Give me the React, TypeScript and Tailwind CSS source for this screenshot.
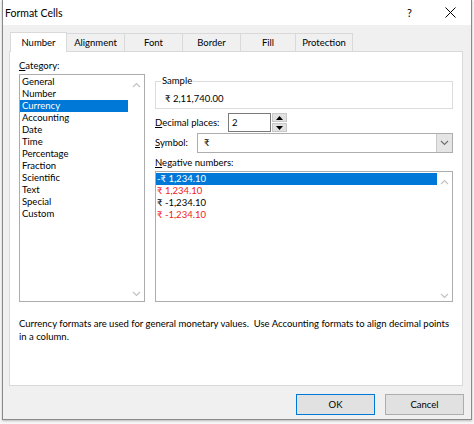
import React from "react";

const font = { fontFamily: 'Lato, "Noto Sans", sans-serif' };

function ChevUp({ className = "" }: { className?: string }) {
  return (
    <svg width="9" height="6" viewBox="0 0 9 6" className={className}>
      <path d="M1 5 L4.5 1.5 L8 5" fill="none" stroke="#c2c2c2" strokeWidth="1.2" />
    </svg>
  );
}
function ChevDown({ className = "", color = "#c2c2c2" }: { className?: string; color?: string }) {
  return (
    <svg width="9" height="6" viewBox="0 0 9 6" className={className}>
      <path d="M1 1 L4.5 4.5 L8 1" fill="none" stroke={color} strokeWidth="1.2" />
    </svg>
  );
}

const categories = [
  "General",
  "Number",
  "Currency",
  "Accounting",
  "Date",
  "Time",
  "Percentage",
  "Fraction",
  "Scientific",
  "Text",
  "Special",
  "Custom",
];

const negatives = [
  { t: "-₹ 1,234.10", red: false },
  { t: "₹ 1,234.10", red: true },
  { t: "₹ -1,234.10", red: false },
  { t: "₹ -1,234.10", red: true },
];

const tabs = ["Number", "Alignment", "Font", "Border", "Fill", "Protection"];
const tabW = [57, 59, 59, 59, 56, 58];

export default function App() {
  return (
    <div className="w-[474px] h-[424px] bg-[#f7f7f7] overflow-hidden text-[9.5px] text-black" style={font}>
      <div className="ml-[2px] w-[470px] h-[420px] border-l border-r border-b border-[#8a8a8a] bg-[#f0f0f0] flex flex-col shadow-[0_1px_2px_rgba(0,0,0,0.25)]">
        {/* title bar */}
        <div className="h-[25px] bg-white flex items-center pl-[2px]">
          <span className="text-[10.5px] leading-[14px]">Format Cells</span>
          <span className="ml-auto mr-[33px] text-[11px] leading-[14px]">?</span>
          <svg width="11" height="11" viewBox="0 0 11 11" className="mr-[15px]">
            <path d="M0.5 0.5 L10.5 10.5 M10.5 0.5 L0.5 10.5" stroke="#000" strokeWidth="1" />
          </svg>
        </div>
        {/* body */}
        <div className="flex-1 pl-[6px] pr-[7px] pt-[6px] flex flex-col">
          {/* tabs */}
          <div className="flex items-end h-[20px] pl-[1px] relative z-10">
            {tabs.map((t, i) =>
              i === 0 ? (
                <div
                  key={t}
                  className="h-[20px] mb-[-1px] bg-white border border-b-0 border-[#d9d9d9] flex items-center justify-center leading-[14px]"
                  style={{ width: tabW[i] }}
                >
                  {t}
                </div>
              ) : (
                <div
                  key={t}
                  className="h-[18px] -ml-px bg-[#f0f0f0] border border-b-0 border-[#d9d9d9] flex items-center justify-center leading-[14px]"
                  style={{ width: tabW[i] }}
                >
                  {t}
                </div>
              )
            )}
          </div>
          {/* panel */}
          <div className="w-[454px] h-[335px] bg-white border border-[#d9d9d9] pl-[9px] pt-[7px] flex flex-col">
            <div className="flex gap-[10px]">
              {/* left column */}
              <div className="flex flex-col w-[126px]">
                <div className="leading-[14px] h-[14px]">
                  <span className="underline">C</span>ategory:
                </div>
                <div className="mt-[1px] h-[228px] border border-[#acacac] relative pt-px">
                  <div className="w-[108px] flex flex-col">
                    {categories.map((c) => (
                      <div
                        key={c}
                        className={
                          "h-[12px] leading-[12px] pl-[2px] whitespace-nowrap " +
                          (c === "Currency" ? "bg-[#0078d7] text-white" : "")
                        }
                      >
                        {c}
                      </div>
                    ))}
                  </div>
                  <ChevUp className="absolute right-[3px] top-[7px]" />
                  <ChevDown className="absolute right-[3px] bottom-[4px]" />
                </div>
              </div>
              {/* right column */}
              <div className="flex flex-col w-[298px] pt-[15px]">
                <fieldset className="border border-[#dcdcdc] px-0 pt-[4px] pb-[2px] m-0">
                  <legend className="ml-[5px] px-[1px] leading-[14px]">Sample</legend>
                  <div className="h-[14px] leading-[14px] pl-[9px]">₹ 2,11,740.00</div>
                </fieldset>
                <div className="mt-[4px] h-[19px] flex items-center">
                  <div className="w-[73px] leading-[14px] whitespace-nowrap">
                    <span className="underline">D</span>ecimal places:
                  </div>
                  <div className="w-[43px] h-[19px] border border-[#7a7a7a] pl-[3px] flex items-center leading-[14px]">
                    2
                  </div>
                  <div className="ml-px w-[15px] h-[19px] flex flex-col gap-px">
                    <div className="h-[9px] bg-[#e1e1e1] border border-[#c8c8c8] flex items-center justify-center">
                      <svg width="7" height="4" viewBox="0 0 7 4">
                        <path d="M0 4 L3.5 0 L7 4 Z" fill="#000" />
                      </svg>
                    </div>
                    <div className="h-[9px] bg-[#e1e1e1] border border-[#c8c8c8] flex items-center justify-center">
                      <svg width="7" height="4" viewBox="0 0 7 4">
                        <path d="M0 0 L3.5 4 L7 0 Z" fill="#000" />
                      </svg>
                    </div>
                  </div>
                </div>
                <div className="mt-[1px] h-[20px] flex items-center">
                  <div className="w-[42px] leading-[14px]">
                    <span className="underline">S</span>ymbol:
                  </div>
                  <div className="w-[256px] h-[20px] border border-[#adadad] flex items-center pl-[6px]">
                    <span className="leading-[14px]">₹</span>
                    <div className="ml-auto w-[16px] h-[18px] bg-[#e5e5e5] border-l border-[#c9c9c9] flex items-center justify-center">
                      <ChevDown color="#707070" />
                    </div>
                  </div>
                </div>
                <div className="mt-[2px] h-[15px] leading-[15px]">
                  <span className="underline">N</span>egative numbers:
                </div>
                <div className="mt-[1px] h-[131px] border border-[#acacac] relative pt-px">
                  <div className="w-[281px] flex flex-col">
                    {negatives.map((n, i) => (
                      <div
                        key={i}
                        className={
                          "h-[12px] leading-[12px] pl-[1px] whitespace-nowrap " +
                          (i === 0 ? "bg-[#0078d7] text-white" : n.red ? "text-[#f01c1c]" : "")
                        }
                      >
                        {n.t}
                      </div>
                    ))}
                  </div>
                  <ChevUp className="absolute right-[3px] top-[7px]" />
                  <ChevDown className="absolute right-[3px] bottom-[2px]" />
                </div>
              </div>
            </div>
            <div className="mt-[15px] leading-[13px] whitespace-nowrap">
              Currency formats are used for general monetary values.&nbsp; Use Accounting formats to align decimal points
              <br />
              in a column.
            </div>
          </div>
          {/* buttons */}
          <div className="mt-[8px] flex justify-end gap-[10px]">
            <div className="w-[79px] h-[21px] bg-[#e1e1e1] border border-[#0078d7] flex items-center justify-center leading-[14px]">
              OK
            </div>
            <div className="w-[79px] h-[21px] bg-[#e1e1e1] border border-[#adadad] flex items-center justify-center leading-[14px]">
              Cancel
            </div>
          </div>
        </div>
      </div>
    </div>
  );
}
